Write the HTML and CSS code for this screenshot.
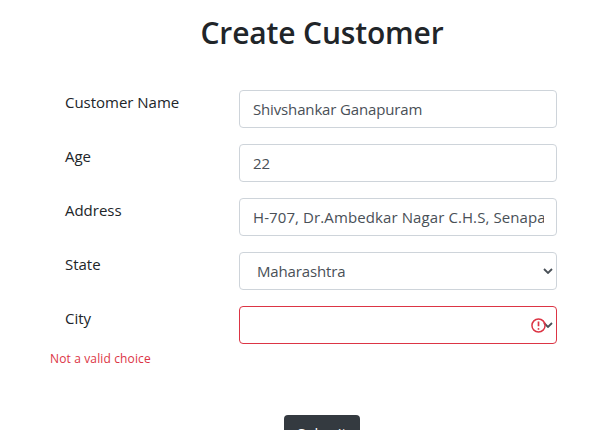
FILE: index.html
```html
<!DOCTYPE html>
<html lang="en">
<head>
    <meta charset="UTF-8">
    <meta name="viewport" content="width=device-width, initial-scale=1.0">
    <title>Create Customer</title>
    <link rel="stylesheet" href="styles.css">
</head>
<body>
    <h1>Create Customer</h1>

    <form class="customer-form">
        <div class="form-row">
            <label for="name">Customer Name</label>
            <input class="form-control" id="name" type="text" value="Shivshankar Ganapuram">
        </div>
        <div class="form-row">
            <label for="age">Age</label>
            <input class="form-control" id="age" type="text" value="22">
        </div>
        <div class="form-row">
            <label for="address">Address</label>
            <input class="form-control address-input" id="address" type="text" value="H-707, Dr.Ambedkar Nagar C.H.S, Senapati Bapat Marg">
        </div>
        <div class="form-row">
            <label for="state">State</label>
            <select class="form-control form-select" id="state">
                <option>Maharashtra</option>
            </select>
        </div>
        <div class="form-row">
            <label for="city">City</label>
            <select class="form-control form-select is-invalid" id="city">
                <option></option>
            </select>
        </div>
        <div class="error-text">Not a valid choice</div>

        <div class="controls">
            <button class="submit-btn" type="submit">Submit</button>
        </div>
    </form>
</body>
</html>
```

FILE: styles.css
```css
* {
    margin: 0;
    padding: 0;
    box-sizing: border-box;
}

html, body {
    height: 430px;
    overflow: hidden;
}

body {
    font-family: 'Open Sans', 'Noto Sans', sans-serif;
    font-size: 15px;
    color: #212529;
    background: #fff;
    padding: 12px 42px 0 50px;
}

h1 {
    font-size: 30px;
    line-height: 42px;
    font-weight: 600;
    text-align: center;
    letter-spacing: -0.15px;
    padding-left: 37px;
    margin-bottom: 36px;
}

.form-row {
    display: flex;
    margin-bottom: 16px;
}

.form-row label {
    width: 189px;
    padding: 1px 0 0 15px;
    line-height: 22px;
    letter-spacing: -0.02px;
}

.form-control {
    width: 318px;
    height: 38px;
    padding: 6px 12px 6px 13px;
    font-family: inherit;
    font-size: 15px;
    letter-spacing: -0.15px;
    color: #495057;
    background-color: #fff;
    border: 1px solid #ced4da;
    border-radius: 4px;
    outline: none;
}

.address-input {
    letter-spacing: 0.1px;
}

.form-select {
    appearance: none;
    padding-left: 17px;
    background-image: url("data:image/svg+xml,%3Csvg xmlns='http://www.w3.org/2000/svg' viewBox='0 0 10 6'%3E%3Cpath d='M1 1l4 4 4-4' fill='none' stroke='%23495057' stroke-width='1.8'/%3E%3C/svg%3E");
    background-repeat: no-repeat;
    background-position: right 3px center;
    background-size: 10px 6px;
}

.form-select.is-invalid {
    border-color: #dc3545;
    background-image: url("data:image/svg+xml,%3Csvg xmlns='http://www.w3.org/2000/svg' viewBox='0 0 16 16'%3E%3Ccircle cx='8' cy='8' r='7' fill='none' stroke='%23dc3545' stroke-width='1.6'/%3E%3Cpath d='M8 3.8v5' stroke='%23dc3545' stroke-width='1.8'/%3E%3Ccircle cx='8' cy='11.6' r='1' fill='%23dc3545'/%3E%3C/svg%3E"),
        url("data:image/svg+xml,%3Csvg xmlns='http://www.w3.org/2000/svg' viewBox='0 0 10 6'%3E%3Cpath d='M1 1l4 4 4-4' fill='none' stroke='%23495057' stroke-width='1.8'/%3E%3C/svg%3E");
    background-position: right 10px center, right 3px center;
    background-size: 15px 15px, 10px 6px;
}

.error-text {
    font-size: 12px;
    line-height: 16px;
    letter-spacing: 0.13px;
    color: #dc3545;
    margin-top: -9px;
}

.controls {
    display: flex;
    justify-content: center;
    margin-top: 48px;
    padding-left: 37px;
}

.submit-btn {
    width: 76px;
    height: 38px;
    padding-bottom: 3px;
    font-family: inherit;
    font-size: 15px;
    font-weight: 500;
    color: #fff;
    background: #343a40;
    border: none;
    border-radius: 4px;
}
```
